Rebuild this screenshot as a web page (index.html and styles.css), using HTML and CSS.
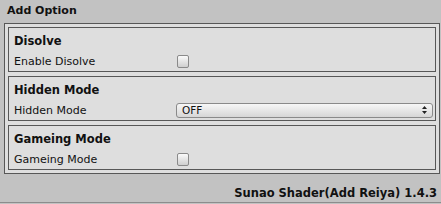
FILE: index.html
```html
<!DOCTYPE html>
<html lang="en">
<head>
    <meta charset="UTF-8">
    <title>Add Option</title>
    <link rel="stylesheet" href="styles.css">
</head>
<body>

<div class="inspector">
    <div class="header">Add Option</div>

    <div class="outer-box">
        <!-- Disolve -->
        <div class="group">
            <div class="group-title">Disolve</div>
            <div class="field">
                <span class="label">Enable Disolve</span>
                <span class="checkbox"></span>
            </div>
        </div>

        <!-- Hidden Mode -->
        <div class="group">
            <div class="group-title">Hidden Mode</div>
            <div class="field">
                <span class="label">Hidden Mode</span>
                <div class="dropdown">
                    <span>OFF</span>
                    <svg class="arrows" width="5" height="8" viewBox="0 0 5 8">
                        <path d="M2.5 0 L5 3 L0 3 Z M2.5 8 L5 5 L0 5 Z" fill="#222"/>
                    </svg>
                </div>
            </div>
        </div>

        <!-- Gameing Mode -->
        <div class="group">
            <div class="group-title">Gameing Mode</div>
            <div class="field">
                <span class="label">Gameing Mode</span>
                <span class="checkbox"></span>
            </div>
        </div>
    </div>

    <div class="footer">Sunao Shader(Add Reiya) 1.4.3</div>
</div>

</body>
</html>
```

FILE: styles.css
```css
body, html {
    margin: 0;
    padding: 0;
    width: 100%;
    height: 100%;
    overflow: hidden;
    background-color: #c2c2c2;
}

.inspector {
    font-family: "DejaVu Sans", Verdana, sans-serif;
    font-size: 11px;
    color: #111;
    height: 203px;
    box-sizing: border-box;
    border-bottom: 1px solid #8c8c8c;
}

.header {
    height: 23px;
    line-height: 22px;
    padding-left: 7px;
    font-weight: bold;
}

.outer-box {
    margin: 0 1px 0 4px;
    border: 1px solid #575757;
    background-color: #dedede;
    padding: 3px;
    display: flex;
    flex-direction: column;
    gap: 4px;
}

.group {
    border: 1px solid #575757;
    padding: 3px 2px 0 5px;
    height: 40px;
}

.group-title {
    height: 20px;
    line-height: 20px;
    font-weight: bold;
    font-size: 11.5px;
}

.field {
    height: 20px;
    display: flex;
    align-items: center;
    font-size: 11px;
}

.label {
    width: 162px;
    flex-shrink: 0;
}

.checkbox {
    width: 10px;
    height: 11px;
    margin-left: 1px;
    border: 1px solid #8a8a8a;
    border-radius: 2px;
    background: linear-gradient(#fafafa, #cfcfcf);
}

.dropdown {
    flex: 1;
    height: 13px;
    border: 1px solid #8a8a8a;
    border-radius: 3px;
    background: linear-gradient(#f7f7f7, #d6d6d6);
    display: flex;
    align-items: center;
    justify-content: space-between;
    padding: 0 5px 0 5px;
    font-size: 10.5px;
}

.footer {
    text-align: right;
    font-weight: bold;
    font-size: 11.5px;
    padding-right: 4px;
    margin-top: 12px;
    line-height: 14px;
}
```
